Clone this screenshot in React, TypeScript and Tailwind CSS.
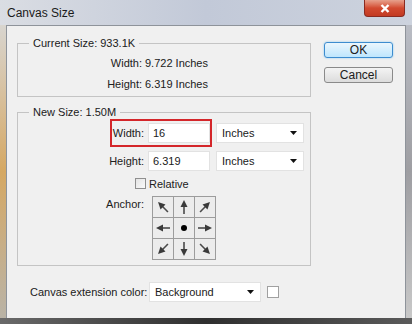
import React from "react";

const font = { fontFamily: '"Liberation Sans", Arial, sans-serif' };

function Arrow({ angle }: { angle: number }) {
  // arrow drawn pointing right, then rotated round the cell centre
  return (
    <svg width="20" height="20" viewBox="0 0 20 20">
      <g transform={`rotate(${angle} 10 10)`}>
        <line x1="3" y1="10" x2="11" y2="10" stroke="#4a4a4a" strokeWidth="1.6" />
        <polygon points="10,6.5 17,10 10,13.5" fill="#3a3a3a" />
      </g>
    </svg>
  );
}

function Select({ value, w }: { value: string; w: string }) {
  return (
    <div className={`flex h-[20px] ${w} items-center justify-between border border-[#e2e2e2] bg-white pl-[5px] pr-[6px]`}>
      <span>{value}</span>
      <svg width="7" height="4" viewBox="0 0 7 4">
        <polygon points="0,0 7,0 3.5,4" fill="#111" />
      </svg>
    </div>
  );
}

function Field({ value }: { value: string }) {
  return (
    <div className="flex h-[20px] w-[62px] items-center border border-[#e2e2e2] bg-white pl-[4px]">
      {value}
    </div>
  );
}

const anchors: (number | null)[] = [225, 270, 315, 180, null, 0, 135, 90, 45];

export default function App() {
  return (
    <div
      className="flex h-[324px] w-[412px] flex-col overflow-hidden bg-[#8d8f96] text-[11px] leading-[14px] text-[#202020]"
      style={font}
    >
      {/* title bar */}
      <div className="flex h-[25px] shrink-0 items-start justify-between bg-gradient-to-r from-[#dadde3] via-[#c2c9d8] to-[#cdd3de]">
        <span className="pl-[7px] pt-[6px] text-[12px] text-[#1a1a1a]">Canvas Size</span>
        <div className="mr-[7px] flex h-[17px] w-[41px] items-center justify-center rounded-b-[4px] border border-t-0 border-[#8a2a20] bg-gradient-to-b from-[#e6a08c] via-[#d24a30] to-[#c23a22]">
          <svg width="10" height="9" viewBox="0 0 10 9">
            <path d="M1.5 1 L8.5 8 M8.5 1 L1.5 8" stroke="#fff" strokeWidth="2.4" />
          </svg>
        </div>
      </div>

      <div className="flex h-[293px] shrink-0">
        <div className="w-[6px] bg-gradient-to-b from-[#d8d5cf] via-[#d5a862] to-[#b9b3a6]" />
        <div className="flex w-[400px] border border-b-0 border-[#8e939a] bg-[#f0f0f0]">
          {/* left column */}
          <div className="flex w-[304px] flex-col pl-[10px] pt-[10px]">
            <fieldset className="w-[294px] border border-[#c4c4c4] pb-[2px] pt-[2px]">
              <legend className="ml-[11px] px-[4px]">Current Size: 933.1K</legend>
              <div className="flex h-[21px] items-center">
                <span className="w-[124px] text-right">Width:</span>
                <span className="pl-[3px]">9.722 Inches</span>
              </div>
              <div className="flex h-[21px] items-center">
                <span className="w-[124px] text-right">Height:</span>
                <span className="pl-[3px]">6.319 Inches</span>
              </div>
            </fieldset>

            <fieldset className="mt-[8px] w-[294px] border border-[#c4c4c4] pb-[5px]">
              <legend className="ml-[11px] px-[4px]">New Size: 1.50M</legend>
              <div className="relative mt-[4px] flex items-center">
                <span className="w-[126px] text-right">Width:</span>
                <div className="ml-[4px]">
                  <Field value="16" />
                </div>
                <div className="ml-[6px]">
                  <Select value="Inches" w="w-[88px]" />
                </div>
                <div className="absolute left-[92px] top-[-4px] h-[28px] w-[102px] border-2 border-[#d4262a]" />
              </div>
              <div className="mt-[8px] flex items-center">
                <span className="w-[126px] text-right">Height:</span>
                <div className="ml-[4px]">
                  <Field value="6.319" />
                </div>
                <div className="ml-[6px]">
                  <Select value="Inches" w="w-[88px]" />
                </div>
              </div>
              <div className="mt-[7px] flex h-[11px] items-center pl-[117px]">
                <div className="h-[11px] w-[11px] border border-[#8f8f8f] bg-gradient-to-br from-[#e4e4e4] to-[#fafafa]" />
                <span className="pl-[3px]">Relative</span>
              </div>
              <div className="mt-[7px] flex items-start">
                <span className="w-[126px] pt-[1px] text-right">Anchor:</span>
                <div className="ml-[8px] grid grid-cols-3 border-l border-t border-[#9c9c9c] bg-[#ececec]">
                  {anchors.map((a, i) => (
                    <div key={i} className="flex h-[21px] w-[21px] items-center justify-center border-b border-r border-[#9c9c9c]">
                      {a === null ? <div className="h-[6px] w-[6px] rounded-full bg-black" /> : <Arrow angle={a} />}
                    </div>
                  ))}
                </div>
              </div>
            </fieldset>

            <div className="mt-[16px] flex items-center pl-[13px]">
              <span className="w-[119px]">Canvas extension color:</span>
              <Select value="Background" w="w-[112px]" />
              <div className="ml-[6px] h-[12px] w-[12px] border border-[#a0a0a0] bg-white" />
            </div>
          </div>

          {/* buttons */}
          <div className="ml-[13px] flex flex-col pt-[16px]">
            <button className="h-[16px] w-[69px] rounded-[3px] border border-[#3c8ccf] bg-gradient-to-b from-[#eaf6fd] to-[#bee6fd] text-[12px] leading-[14px] shadow-[0_0_2px_#7fc4ee]">
              OK
            </button>
            <button className="mt-[9px] h-[16px] w-[69px] rounded-[3px] border border-[#8a8a8a] bg-gradient-to-b from-[#f4f4f4] to-[#dcdcdc] text-[12px] leading-[14px]">
              Cancel
            </button>
          </div>
        </div>
        <div className="w-[6px] bg-gradient-to-b from-[#b9bcc4] via-[#9e9ea2] to-[#c8c8c8]" />
      </div>
      <div className="h-[6px] shrink-0 bg-gradient-to-r from-[#6a6a6a] via-[#2f2f2f] to-[#5a5a5a]" />
    </div>
  );
}
